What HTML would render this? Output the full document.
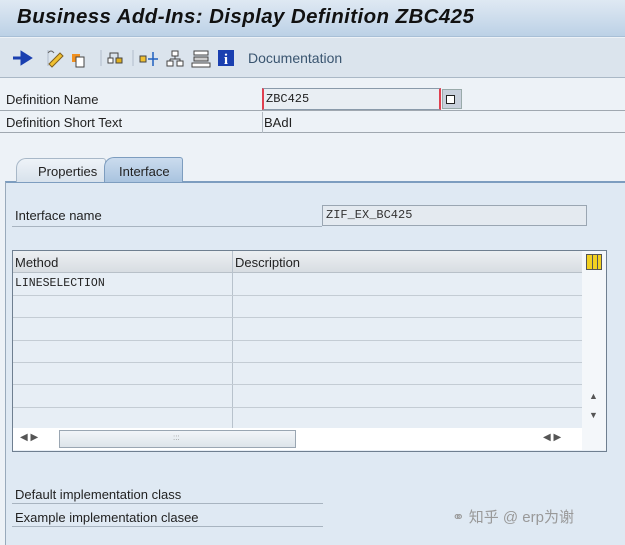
<!DOCTYPE html>
<html><head><meta charset="utf-8"><style>
*{margin:0;padding:0;box-sizing:border-box}
body{width:625px;height:545px;overflow:hidden;background:#edf2f7;font-family:"Liberation Sans",sans-serif;font-size:13px;color:#222;position:relative}
.a{position:absolute}
.mono{font-family:"Liberation Mono",monospace;font-size:12px}
</style></head><body>
<div class="a" style="left:0;top:0;width:625px;height:37px;background:linear-gradient(#dfe9f3,#bcd1e6);border-bottom:1px solid #a8bfd6"></div>
<div class="a" style="left:17px;top:5px;font-size:20.5px;font-weight:bold;font-style:italic;color:#111;letter-spacing:0.4px">Business Add-Ins: Display Definition ZBC425</div>
<div class="a" style="left:0;top:38px;width:625px;height:40px;background:#dbe4ed;border-bottom:1px solid #aab8c6"></div>
<svg class="a" style="left:10px;top:46px" width="230" height="24" viewBox="0 0 230 24">
<path d="M3 12h9v-5l8 5-8 5v-5" fill="#1a3fb0" stroke="#1a3fb0" stroke-width="3"/>
<line x1="38" y1="4" x2="38" y2="20" stroke="#b0bccc"/>
<path d="M39 18l11-11 3 3-11 11z" fill="#f0c030" stroke="#806020"/><path d="M38 7q3-4 6 0" fill="none" stroke="#666"/>
<rect x="62" y="8" width="8" height="8" fill="#f09020"/><rect x="66" y="11" width="8" height="10" fill="#fff" stroke="#444"/>
<line x1="91" y1="4" x2="91" y2="20" stroke="#b0bccc"/>
<rect x="98" y="12" width="5" height="5" fill="#fff" stroke="#444"/><rect x="106" y="12" width="6" height="5" fill="#e0b020" stroke="#444"/><path d="M100 12v-5h8v5" fill="none" stroke="#444"/>
<line x1="123" y1="4" x2="123" y2="20" stroke="#b0bccc"/>
<rect x="130" y="10" width="6" height="6" fill="#f0c030" stroke="#444"/><path d="M138 13h10M143 6v14" stroke="#2060c0" stroke-width="1.5"/>
<rect x="162" y="5" width="6" height="5" fill="#fff" stroke="#444"/><rect x="157" y="15" width="6" height="5" fill="#fff" stroke="#444"/><rect x="167" y="15" width="6" height="5" fill="#fff" stroke="#444"/><path d="M165 10v3M160 13h10v2M160 13v2" stroke="#444" fill="none"/>
<rect x="184" y="5" width="14" height="4" fill="#fff" stroke="#444"/><rect x="184" y="11" width="14" height="4" fill="#ccc" stroke="#444"/><rect x="182" y="17" width="18" height="4" fill="#fff" stroke="#444"/>
<rect x="208" y="4" width="16" height="16" fill="#1a3fb0"/><text x="216" y="18" fill="#fff" font-family="Liberation Serif" font-weight="bold" font-size="15" text-anchor="middle">i</text>
</svg>
<div class="a" style="left:248px;top:50px;color:#3a5570;font-size:14px">Documentation</div>
<div class="a" style="left:0;top:88px;width:625px;height:23px;border-bottom:1px solid #a0a8b0"></div>
<div class="a" style="left:6px;top:92px">Definition Name</div>
<div class="a" style="left:262px;top:88px;width:179px;height:22px;border:1px solid #8a9aaa;background:#e9eef3;border-left:2px solid #e04050;border-right:2px solid #e04050"></div>
<div class="a mono" style="left:266px;top:92px">ZBC425</div>
<div class="a" style="left:442px;top:89px;width:20px;height:20px;background:#c8d0dc;border:1px solid #9aa"></div>
<div class="a" style="left:446px;top:95px;width:9px;height:9px;background:#fff;border:1px solid #222"></div>
<div class="a" style="left:0;top:112px;width:625px;height:21px;border-bottom:1px solid #a0a8b0"></div>
<div class="a" style="left:6px;top:115px">Definition Short Text</div>
<div class="a" style="left:262px;top:112px;width:1px;height:21px;background:#b0b8c0"></div>
<div class="a" style="left:264px;top:115px">BAdI</div>
<div class="a" style="left:5px;top:181px;width:620px;height:364px;background:#dfe9f3;border-top:2px solid #7d9dbf;border-left:1px solid #9ab"></div>
<div class="a" style="left:16px;top:158px;width:90px;height:24px;background:linear-gradient(#eef3f8,#d8e2ec);border:1px solid #a8b8c8;border-bottom:none;border-radius:10px 3px 0 0"></div>
<div class="a" style="left:38px;top:164px">Properties</div>
<div class="a" style="left:104px;top:157px;width:79px;height:25px;background:linear-gradient(#cbdcee,#a9c4df);border:1px solid #7d9dbf;border-bottom:none;border-radius:10px 3px 0 0"></div>
<div class="a" style="left:119px;top:164px">Interface</div>
<div class="a" style="left:12px;top:206px;width:310px;height:21px;border-bottom:1px solid #a8b4c0"></div>
<div class="a" style="left:15px;top:208px">Interface name</div>
<div class="a" style="left:322px;top:205px;width:265px;height:21px;background:#e4eaf0;border:1px solid #9aa6b2"></div>
<div class="a mono" style="left:326px;top:208px;color:#333">ZIF_EX_BC425</div>
<div class="a" style="left:12px;top:250px;width:595px;height:202px;border:1px solid #6f7f90;background:#e7eef5"></div>
<div class="a" style="left:13px;top:251px;width:569px;height:22px;background:linear-gradient(#eceff2,#d8dde2);border-bottom:1px solid #b8c0c8"></div>
<div class="a" style="left:582px;top:251px;width:24px;height:199px;background:#f4f7fa"></div>
<div class="a" style="left:586px;top:254px;width:16px;height:16px;background:#f2d020;border:1px solid #555"></div>
<div class="a" style="left:592px;top:255px;width:1px;height:14px;background:#555"></div><div class="a" style="left:597px;top:255px;width:1px;height:14px;background:#555"></div>
<div class="a" style="left:15px;top:255px">Method</div>
<div class="a" style="left:235px;top:255px">Description</div>
<div class="a" style="left:232px;top:251px;width:1px;height:177px;background:#b8c2cc"></div>
<div class="a" style="left:13px;top:295px;width:569px;height:1px;background:#c4ccd4"></div>
<div class="a" style="left:13px;top:317px;width:569px;height:1px;background:#c4ccd4"></div>
<div class="a" style="left:13px;top:340px;width:569px;height:1px;background:#c4ccd4"></div>
<div class="a" style="left:13px;top:362px;width:569px;height:1px;background:#c4ccd4"></div>
<div class="a" style="left:13px;top:384px;width:569px;height:1px;background:#c4ccd4"></div>
<div class="a" style="left:13px;top:407px;width:569px;height:1px;background:#c4ccd4"></div>
<div class="a mono" style="left:15px;top:277px;font-size:11.5px">LINESELECTION</div>
<div class="a" style="left:589px;top:391px;font-size:9px;color:#555">▲</div>
<div class="a" style="left:589px;top:410px;font-size:9px;color:#555">▼</div>
<div class="a" style="left:13px;top:428px;width:569px;height:22px;background:#fff"></div>
<div class="a" style="left:20px;top:432px;font-size:10px;color:#555">◀ ▶</div>
<div class="a" style="left:59px;top:430px;width:237px;height:18px;background:linear-gradient(#f2f5f8,#dde4ea);border:1px solid #9aa6b2"></div>
<div class="a" style="left:173px;top:433px;font-size:8px;color:#999">:::</div>
<div class="a" style="left:543px;top:432px;font-size:10px;color:#555">◀ ▶</div>
<div class="a" style="left:12px;top:485px;width:311px;height:19px;border-bottom:1px solid #a8b4c0"></div>
<div class="a" style="left:15px;top:487px">Default implementation class</div>
<div class="a" style="left:12px;top:508px;width:311px;height:19px;border-bottom:1px solid #a8b4c0"></div>
<div class="a" style="left:15px;top:510px">Example implementation clasee</div>
<div class="a" style="left:452px;top:506px;font-family:'Liberation Sans','Noto Sans CJK SC',sans-serif;font-size:15px;color:#999">⚭ 知乎 @ erp为谢</div>
</body></html>
